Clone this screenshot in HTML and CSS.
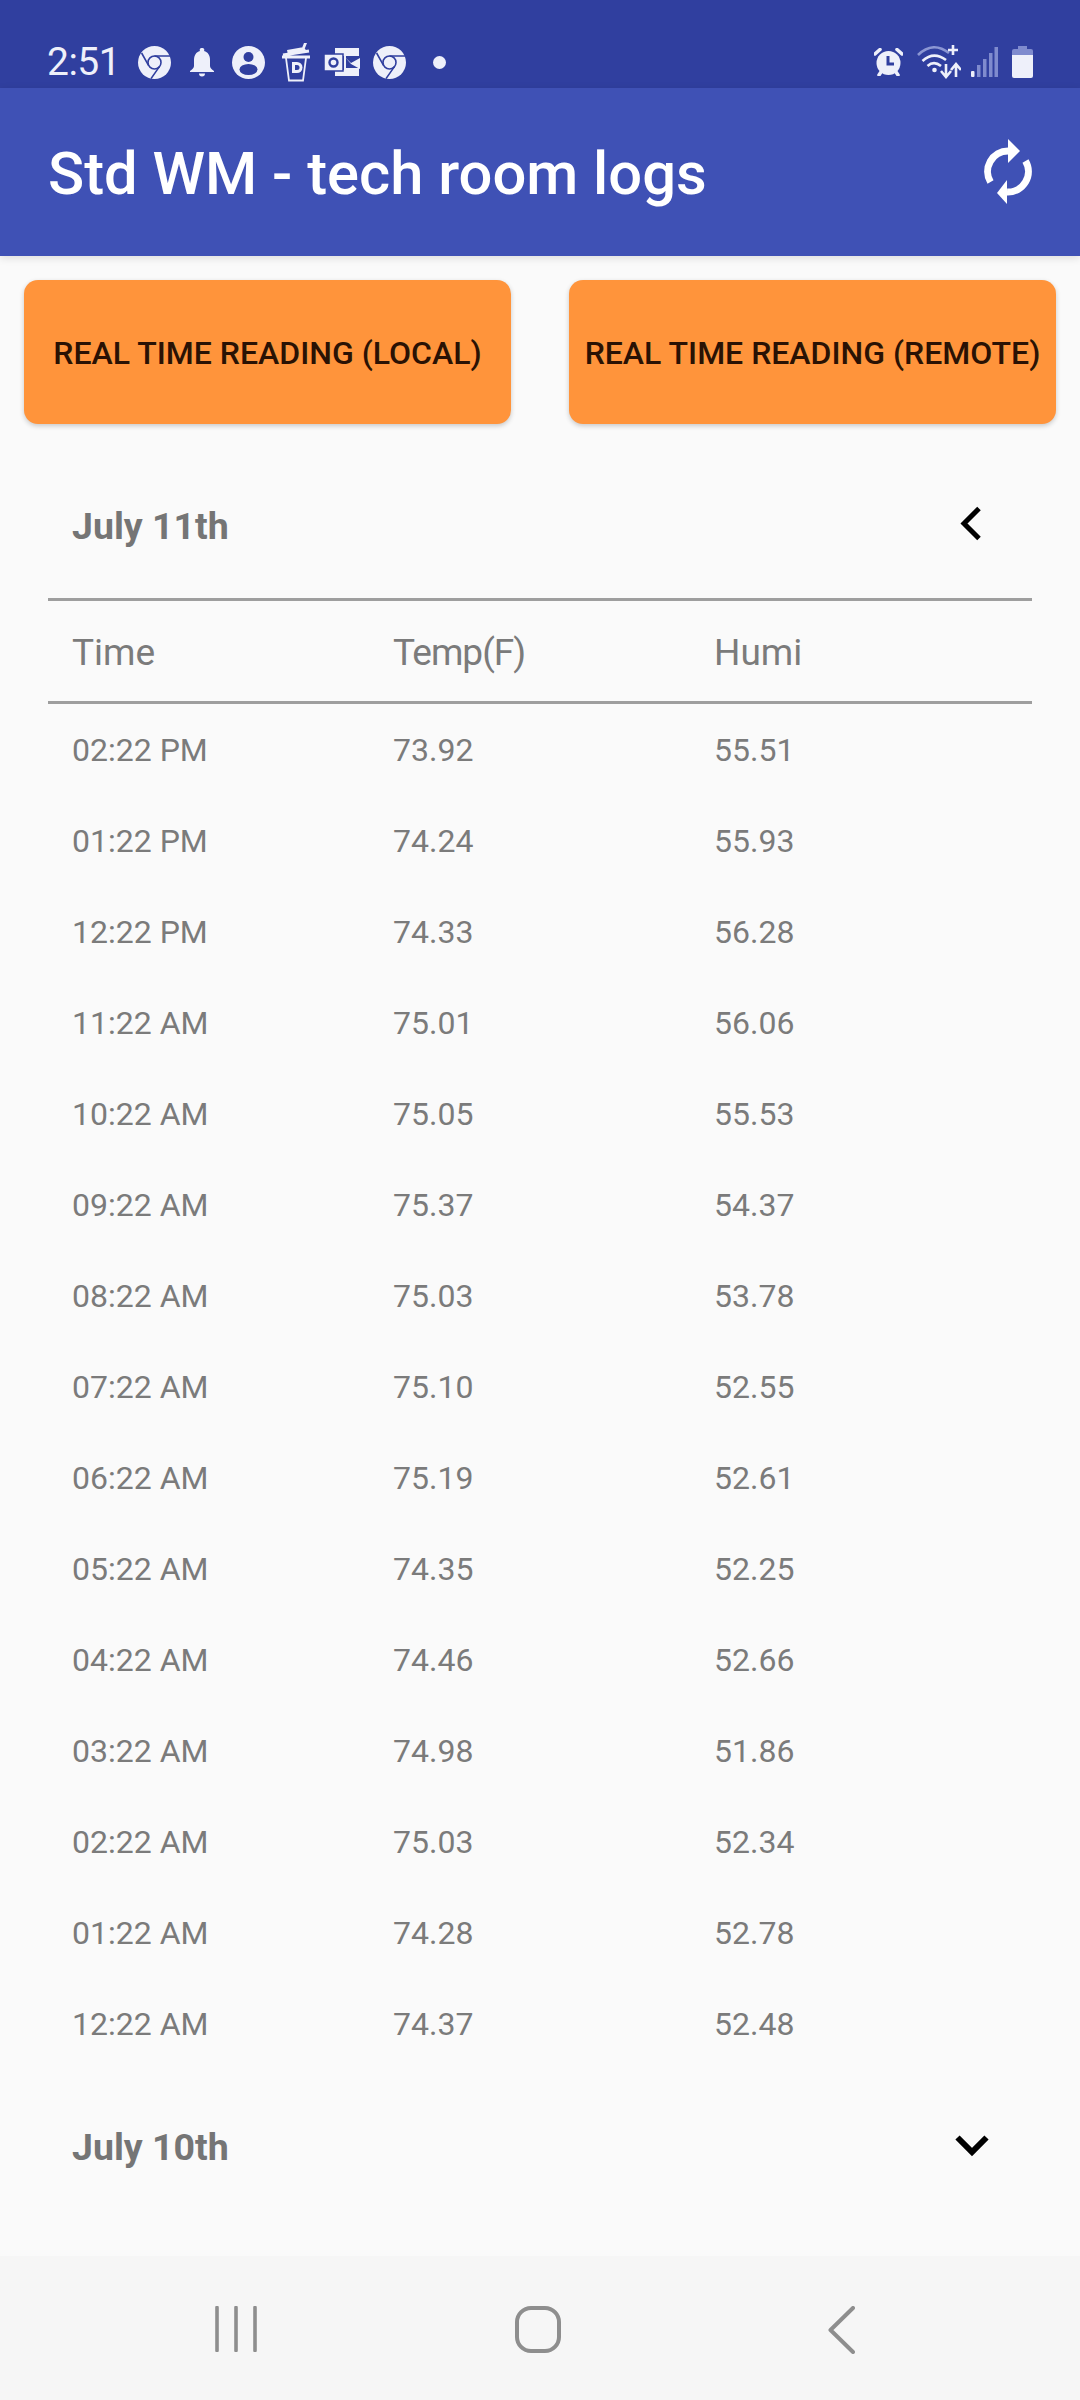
FILE: index.html
```html
<!DOCTYPE html>
<html lang="en">
<head>
  <meta charset="UTF-8">
  <title>Std WM - tech room logs</title>
  <link rel="stylesheet" href="styles.css">
</head>
<body>

  <!-- status bar -->
  <div class="status-bar">
    <div class="status-left">
      <span class="clock">2:51</span>
      <svg class="ic-chrome" viewBox="0 0 33 33"><circle cx="16.5" cy="16.5" r="16.5" fill="#eef0fa"/><circle cx="16.5" cy="16.5" r="6.5" fill="none" stroke="#303f9f" stroke-width="1.6"/><path d="M16.5 10H32M10.8 19.8L3.6 7M21.6 20.4L13 32.6" fill="none" stroke="#303f9f" stroke-width="1.6"/></svg>
      <svg class="ic-bell" viewBox="0 0 24 29"><path d="M12 0a2 2 0 0 1 2 3c4 1 6 4.500 6 9v6c0 2 1.500 3 4 5v1H0v-1c2.500-2 4-3 4-5v-6c0-4.500 2-8 6-9a2 2 0 0 1 2-3zM9 25.500h6a3 3 0 0 1-6 0z" fill="#eef0fa"/></svg>
      <svg class="ic-person" viewBox="0 0 33 33"><circle cx="16.500" cy="16.500" r="16.500" fill="#eef0fa"/><circle cx="16.500" cy="11" r="5" fill="#303f9f"/><ellipse cx="16.500" cy="23.500" rx="9" ry="5.500" fill="#303f9f"/></svg>
      <svg class="ic-cup" viewBox="0 0 29 39"><path d="M1 12L27 8M0 14H28" stroke="#eef0fa" stroke-width="3" fill="none"/><path d="M5 7L22 4L25 9L6 12zM20 5L22 0H25L23 5z" fill="#eef0fa"/><path d="M4 15L7 37.500H21L24 15" fill="none" stroke="#eef0fa" stroke-width="1.800"/><path d="M10 19h5a5.500 5.500 0 0 1 0 11h-5z" fill="#eef0fa"/><path d="M13 22h2a2.500 2.500 0 0 1 0 5h-2z" fill="#303f9f"/></svg>
      <svg class="ic-outlook" viewBox="0 0 36 28"><path d="M11 0H35V8H11zM11 22L35 22V28H11z" fill="#eef0fa"/><path d="M0 6H19V23H0z" fill="#eef0fa" stroke="#303f9f" stroke-width="1.500"/><circle cx="9.500" cy="14.500" r="4" fill="none" stroke="#303f9f" stroke-width="2.400"/><path d="M21 9L27 15L36 10V21L27 16" fill="#eef0fa"/><path d="M21 8V21H35" fill="none" stroke="#eef0fa" stroke-width="2"/></svg>
      <svg class="ic-chrome" viewBox="0 0 33 33"><circle cx="16.5" cy="16.5" r="16.5" fill="#eef0fa"/><circle cx="16.5" cy="16.5" r="6.5" fill="none" stroke="#303f9f" stroke-width="1.6"/><path d="M16.5 10H32M10.8 19.8L3.6 7M21.6 20.4L13 32.6" fill="none" stroke="#303f9f" stroke-width="1.6"/></svg>
      <span class="dot"></span>
    </div>
    <div class="status-right">
      <svg class="ic-alarm" viewBox="0 0 29 28"><circle cx="14.500" cy="15" r="12" fill="#eef0fa"/><path d="M1 6L6 1.500M28 6L23 1.500M5 27L7 24M24 27L22 24" stroke="#eef0fa" stroke-width="3.500" stroke-linecap="round"/><path d="M14 8V16H20" fill="none" stroke="#303f9f" stroke-width="3"/></svg>
      <svg class="ic-wifi" viewBox="0 0 44 34"><path d="M1 10C11 0 22 0 32 8" fill="none" stroke="#8b96d3" stroke-width="2.600"/><path d="M5.500 16C13 9 21 9 29 15" fill="none" stroke="#eef0fa" stroke-width="2.600"/><path d="M10.500 21C15 17 19 17 24 21" fill="none" stroke="#eef0fa" stroke-width="2.600"/><circle cx="17.500" cy="25" r="2.300" fill="#eef0fa"/><path d="M36 0V10M31 5H41M29 19V31M24 26L29 32L34 26M39 32V20M34 25L39 19L44 25" fill="none" stroke="#eef0fa" stroke-width="2.600"/></svg>
      <svg class="ic-signal" viewBox="0 0 27 30"><rect x="0" y="24" width="3.500" height="6" rx="1" fill="#eef0fa"/><rect x="6" y="18" width="3.500" height="12" fill="#7f8bce"/><rect x="12" y="12" width="3.500" height="18" fill="#7f8bce"/><rect x="18" y="6" width="3.500" height="24" fill="#7f8bce"/><rect x="23.500" y="0" width="3.500" height="30" fill="#7f8bce"/></svg>
      <svg class="ic-battery" viewBox="0 0 21 32"><path d="M6 0H15V3H19a2 2 0 0 1 2 2V9H0V5a2 2 0 0 1 2-2H6z" fill="#7f8bce"/><path d="M0 9H21V30a2 2 0 0 1-2 2H2a2 2 0 0 1-2-2z" fill="#eef0fa"/></svg>
    </div>
  </div>

  <!-- app bar -->
  <div class="app-bar">
    <h1>Std WM - tech room logs</h1>
    <svg class="ic-refresh" viewBox="0 0 48 66">
      <path d="M24 12A20.500 20.500 0 0 0 6.500 43" fill="none" stroke="#fff" stroke-width="7"/>
      <path d="M24 0L36 12L24 24z" fill="#fff"/>
      <path d="M23 53A20.500 20.500 0 0 0 41.500 22" fill="none" stroke="#fff" stroke-width="7"/>
      <path d="M23 41L13 54L23 65z" fill="#fff"/>
    </svg>
  </div>

  <div class="boutons">
    <button class="bouton">REAL TIME READING (LOCAL)</button>
    <button class="bouton">REAL TIME READING (REMOTE)</button>
  </div>

  <div class="contenu">
    <div class="jour jour-ouvert">
      <span>July 11th</span>
      <svg class="chevron-left" viewBox="0 0 22 35"><path d="M19 2.500L4 17.500L19 32.500" fill="none" stroke="#000" stroke-width="5"/></svg>
    </div>

    <div class="ligne entete">
      <span>Time</span><span class="col-temp">Temp(F)</span><span>Humi</span>
    </div>

    <div class="ligne"><span>02:22 PM</span><span>73.92</span><span>55.51</span></div>
    <div class="ligne"><span>01:22 PM</span><span>74.24</span><span>55.93</span></div>
    <div class="ligne"><span>12:22 PM</span><span>74.33</span><span>56.28</span></div>
    <div class="ligne"><span>11:22 AM</span><span>75.01</span><span>56.06</span></div>
    <div class="ligne"><span>10:22 AM</span><span>75.05</span><span>55.53</span></div>
    <div class="ligne"><span>09:22 AM</span><span>75.37</span><span>54.37</span></div>
    <div class="ligne"><span>08:22 AM</span><span>75.03</span><span>53.78</span></div>
    <div class="ligne"><span>07:22 AM</span><span>75.10</span><span>52.55</span></div>
    <div class="ligne"><span>06:22 AM</span><span>75.19</span><span>52.61</span></div>
    <div class="ligne"><span>05:22 AM</span><span>74.35</span><span>52.25</span></div>
    <div class="ligne"><span>04:22 AM</span><span>74.46</span><span>52.66</span></div>
    <div class="ligne"><span>03:22 AM</span><span>74.98</span><span>51.86</span></div>
    <div class="ligne"><span>02:22 AM</span><span>75.03</span><span>52.34</span></div>
    <div class="ligne"><span>01:22 AM</span><span>74.28</span><span>52.78</span></div>
    <div class="ligne"><span>12:22 AM</span><span>74.37</span><span>52.48</span></div>

    <div class="jour jour-ferme">
      <span>July 10th</span>
      <svg class="chevron-down" viewBox="0 0 36 23"><path d="M3.500 3.500L18 18L32.500 3.500" fill="none" stroke="#000" stroke-width="6"/></svg>
    </div>
  </div>

  <!-- navigation -->
  <div class="nav-bar">
    <svg class="ic-recents" viewBox="0 0 42 46"><path d="M2 1.500V44.500M21 1.500V44.500M40 1.500V44.500" stroke="#8e8e8e" stroke-width="3.600" stroke-linecap="round"/></svg>
    <svg class="ic-home" viewBox="0 0 46 47"><rect x="2" y="2" width="42" height="43" rx="14" fill="none" stroke="#8e8e8e" stroke-width="4"/></svg>
    <svg class="ic-back" viewBox="0 0 27 48"><path d="M25 2L2.500 24L25 46" fill="none" stroke="#8e8e8e" stroke-width="4" stroke-linecap="round" stroke-linejoin="round"/></svg>
  </div>

</body>
</html>
```

FILE: styles.css
```css
* {
  box-sizing: border-box;
}

body {
  background-color: #fafafa;
  font-family: Roboto, "Liberation Sans", sans-serif;
  margin: 0;
  padding: 0;
  width: 1080px;
  height: 2400px;
  overflow: hidden;
  display: flex;
  flex-direction: column;
}

svg {
  display: block;
  flex: none;
}

/* status bar */
.status-bar {
  height: 88px;
  background-color: #303f9f;
  padding: 42px 47px 0 47px;
  display: flex;
  justify-content: space-between;
  align-items: flex-start;
}

.status-left, .status-right {
  display: flex;
  align-items: center;
  height: 40px;
}

.clock {
  color: #eef0fa;
  font-size: 39px;
  letter-spacing: -0.5px;
  width: 91px;
}

.ic-chrome { width: 33px; height: 33px; }
.ic-bell { width: 24px; height: 29px; margin-left: 19px; margin-right: 18px; }
.ic-person { width: 33px; height: 33px; margin-right: 17px; }
.ic-cup { width: 29px; height: 39px; margin-right: 13px; }
.ic-outlook { width: 36px; height: 28px; margin-right: 13px; }

.dot {
  width: 13px;
  height: 13px;
  margin-left: 27px;
  border-radius: 50%;
  background-color: #eef0fa;
}

.ic-alarm { width: 29px; height: 28px; margin-right: 14px; }
.ic-wifi { width: 44px; height: 34px; margin-right: 10px; }
.ic-signal { width: 27px; height: 30px; margin-right: 14px; }
.ic-battery { width: 21px; height: 32px; }

/* app bar */
.app-bar {
  height: 168px;
  background-color: #3f51b5;
  padding: 0 48px;
  display: flex;
  align-items: center;
  justify-content: space-between;
  box-shadow: 0 2px 8px rgba(0,0,0,0.12);
}

.app-bar h1 {
  margin: 3px 0 0 0;
  color: white;
  font-size: 59.7px;
  font-weight: 500;
}

.ic-refresh { width: 48px; height: 66px; }

/* buttons */
.boutons {
  display: flex;
  justify-content: space-between;
  padding: 24px 24px 0 24px;
}

.bouton {
  width: 487px;
  height: 144px;
  padding: 2px 0 0 0;
  border: none;
  border-radius: 14px;
  background-color: #ff943b;
  color: #2a1204;
  font-family: inherit;
  font-size: 32px;
  font-weight: 500;
  box-shadow: 0 2px 5px rgba(0,0,0,0.2);
}

/* table */
.contenu {
  flex: 1;
  padding: 0 48px;
}

.jour {
  display: flex;
  justify-content: space-between;
  align-items: center;
  padding: 0 24px;
  color: #757575;
  font-size: 37.5px;
  font-weight: 700;
}

.jour-ouvert {
  height: 177px;
  padding-top: 29px;
  border-bottom: 3px solid #9e9e9e;
}

.jour-ferme {
  height: 150px;
  padding-top: 6px;
}

.chevron-left { width: 22px; height: 35px; margin-right: 26px; margin-top: -5px; }
.chevron-down { width: 36px; height: 23px; margin-right: 18px; margin-top: -3px; }

.ligne {
  display: grid;
  grid-template-columns: 321px 321px 1fr;
  align-items: center;
  height: 91px;
  padding: 0 24px;
  color: #7b7b7b;
  font-size: 32px;
}

.entete {
  height: 103px;
  padding-top: 3px;
  font-size: 37px;
  border-bottom: 3px solid #9e9e9e;
}

.col-temp {
  letter-spacing: -1px;
}

/* navigation */
.nav-bar {
  height: 144px;
  background-color: #f6f6f6;
  padding: 50px 0 0 215px;
  display: flex;
  align-items: flex-start;
}

.ic-recents { width: 42px; height: 46px; }
.ic-home { width: 46px; height: 47px; margin-left: 258px; }
.ic-back { width: 27px; height: 48px; margin-left: 267px; }
```
